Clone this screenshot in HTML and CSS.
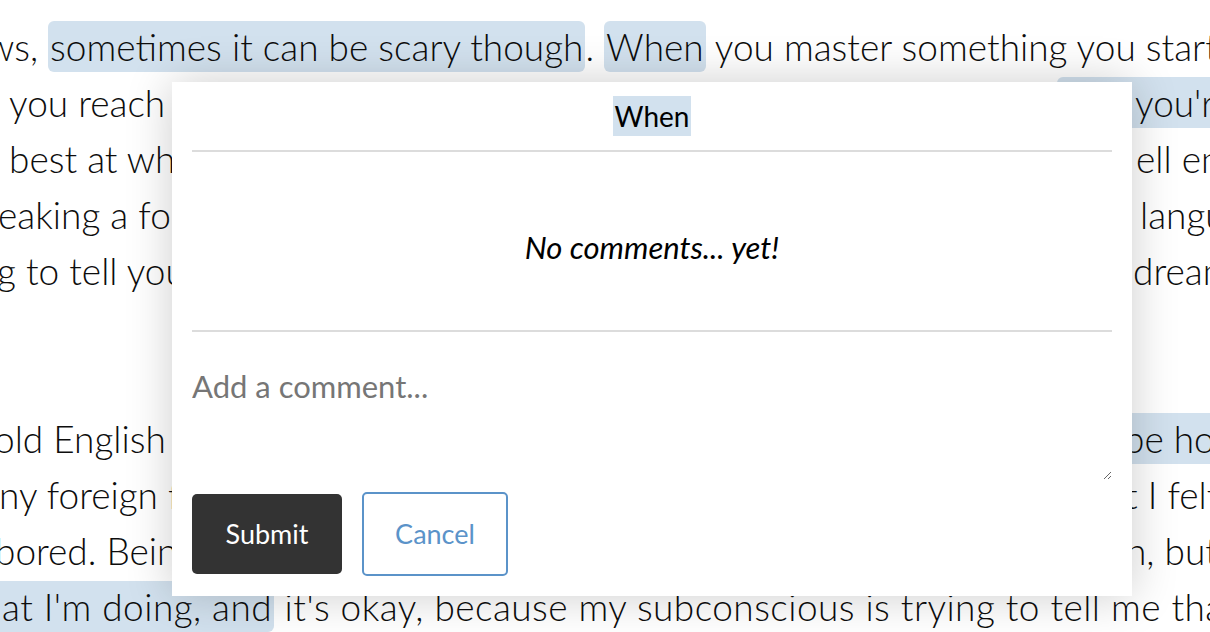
FILE: index.html
```html
<!DOCTYPE html>
<html lang="en">
<head>
<meta charset="utf-8">
<title>Comments</title>
<link rel="stylesheet" href="styles.css">
</head>
<body>
<div class="page">
  <div class="article">
    <div class="line full l1">ws, <span class="hl">sometimes it can be scary though</span>. <span class="hl">When</span> you master something you start</div>
    <div class="line"><span class="lt l2">you reach the point where you think that</span><span class="rt"><span class="hl back-2">you're the best</span></span></div>
    <div class="line"><span class="lt l3">best at what you do, and you cannot tell</span><span class="rt r3">ell enough</span></div>
    <div class="line"><span class="lt l4">eaking a foreign language is a skill, and a</span><span class="rt r4">language</span></div>
    <div class="line"><span class="lt l5">g to tell you that you are living your</span><span class="rt r5">dreams</span></div>
    <div class="line"><span class="lt"></span><span class="rt"></span></div>
    <div class="line"><span class="lt"></span><span class="rt"></span></div>
    <div class="line"><span class="lt l8">old English and some other languages, to</span><span class="rt"><span class="hl back-8">be honest</span></span></div>
    <div class="line"><span class="lt l9">ny foreign friends, and that is how</span><span class="rt r9">t I felt</span></div>
    <div class="line"><span class="lt l10">bored. Being a native speaker is a gift</span><span class="rt r10">n, but</span></div>
    <div class="line full l11"><span class="hl">at I'm doing, and</span> it's okay, because my subconscious is trying to tell me that</div>
  </div>

  <div class="modal">
    <div class="modal-head"><span class="sel">When</span></div>
    <div class="comments"><em>No comments... yet!</em></div>
    <textarea class="comment-input" placeholder="Add a comment..."></textarea>
    <div class="actions">
      <button class="btn btn-submit" type="button">Submit</button>
      <button class="btn btn-cancel" type="button">Cancel</button>
    </div>
  </div>
</div>
</body>
</html>
```

FILE: styles.css
```css
html, body {
  margin: 0;
  padding: 0;
  background: #fff;
}

.page {
  position: relative;
  width: 1210px;
  height: 632px;
  overflow: hidden;
  font-family: Lato, "Liberation Sans", sans-serif;
}

.article {
  padding-top: 19px;
  font-weight: 300;
  font-size: 37px;
  line-height: 56px;
  color: #0d0d0d;
}

.line {
  display: grid;
  grid-template-columns: 1132px 1fr;
  height: 56px;
  white-space: nowrap;
  overflow: hidden;
}

.line.full {
  display: block;
}

.lt {
  overflow: hidden;
}

.hl {
  background: #d2e1ee;
  border-radius: 6px;
  padding: 3px 2px;
}

.l1 { text-indent: -14px; }
.l2 { padding-left: 9px; }
.l3 { padding-left: 9px; }
.l4 { text-indent: -2px; }
.l5 { text-indent: -3px; }
.l8 { text-indent: -6px; }
.l9 { text-indent: -1px; }
.l10 { text-indent: -5px; }
.l11 { text-indent: -5px; letter-spacing: 0.45px; }
.l11 .hl { padding-left: 7px; border-radius: 0 6px 6px 0; }

.back-2 { margin-left: -75px; padding-left: 78px; }
.back-8 { margin-left: -44px; padding-left: 36px; }
.r3 { padding-left: 4px; }
.r4 { padding-left: 8px; }
.r5 { padding-left: 1px; }
.r9 { margin-left: -7px; }
.r10 { margin-left: -6px; }

.modal {
  position: absolute;
  left: 172px;
  top: 82px;
  width: 960px;
  box-sizing: border-box;
  padding: 0 20px 20px;
  background: #fff;
  box-shadow: 0 0 44px rgba(0, 0, 0, 0.2);
  font-size: 31px;
  font-weight: 400;
  color: #000;
}

.modal-head {
  text-align: center;
  padding: 14px 0;
  line-height: 40px;
  font-size: 28px;
  border-bottom: 2px solid #dcdcdc;
}

.sel {
  background: #d2e1ee;
  padding: 3px 2px;
}

.comments {
  height: 180px;
  box-sizing: border-box;
  padding-top: 12px;
  display: flex;
  align-items: center;
  justify-content: center;
  line-height: 40px;
  border-bottom: 2px solid #dcdcdc;
}

.comments em {
  font-style: italic;
}

.comment-input {
  display: block;
  width: 100%;
  height: 128px;
  margin: 20px 0 0;
  padding: 14px 0;
  box-sizing: border-box;
  border: 0;
  outline: none;
  resize: vertical;
  font-family: inherit;
  font-size: 31px;
  line-height: 40px;
  color: #000;
  background: #fff;
}

.comment-input::placeholder {
  color: #767676;
}

.actions {
  display: flex;
  align-items: center;
  gap: 20px;
  margin-top: 12px;
}

.btn {
  font-family: inherit;
  font-size: 27px;
  line-height: 40px;
  border-radius: 5px;
  padding: 0;
  cursor: pointer;
}

.btn-submit {
  width: 150px;
  height: 80px;
  background: #333;
  color: #fff;
  border: 0;
}

.btn-cancel {
  width: 146px;
  height: 84px;
  background: #fff;
  color: #5b93c9;
  border: 2px solid #5b93c9;
}
```
